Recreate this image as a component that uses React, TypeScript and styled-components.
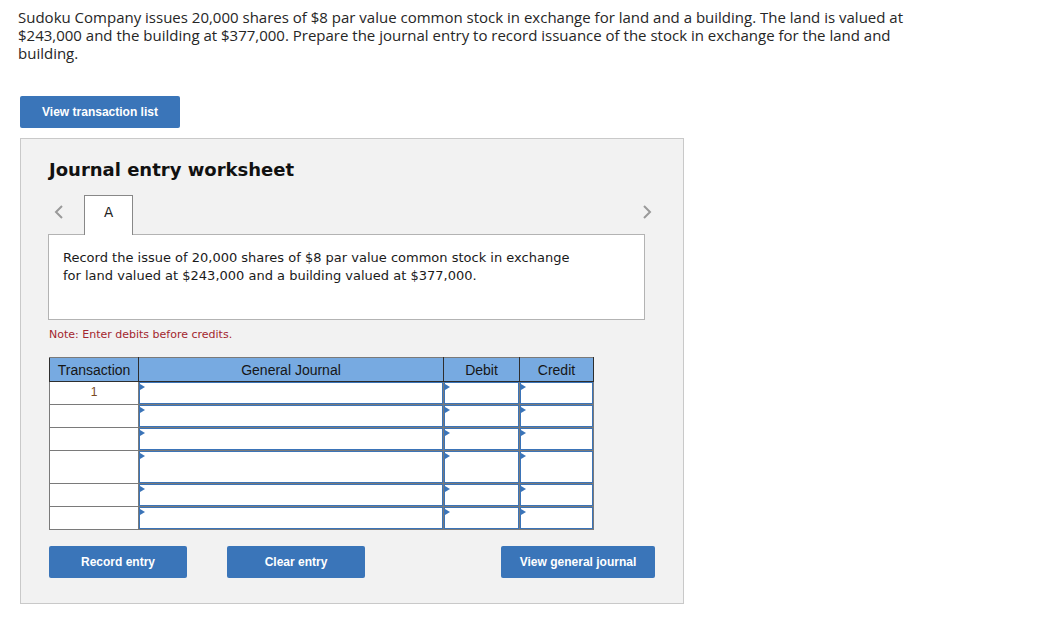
import React from "react"
import styled, { createGlobalStyle } from "styled-components"

const GlobalStyle = createGlobalStyle`
    body {
        margin: 0;
        background: #ffffff;
    }
`

const Page = styled.div`
    padding: 8px 20px 28px 20px;
    width: 1019px;
`

const Question = styled.p`
    margin: 0 0 34px -2px;
    width: 905px;
    font-family: "Open Sans", sans-serif;
    font-size: 15px;
    line-height: 18px;
    color: #262626;
`

const BlueButton = styled.button<{ $width: number }>`
    width: ${(p) => p.$width}px;
    height: 32px;
    padding: 0;
    border: none;
    border-radius: 2px;
    background: #3a75b9;
    color: #ffffff;
    font-family: "Liberation Sans", Arial, sans-serif;
    font-weight: bold;
    font-size: 12px;
    cursor: pointer;
`

const Panel = styled.div`
    margin-top: 10px;
    width: 606px;
    padding: 20px 28px 25px 28px;
    background: #f2f2f2;
    border: 1px solid #c9c9c9;
`

const Title = styled.h2`
    margin: 0 0 14px 0;
    font-family: "DejaVu Sans", Verdana, sans-serif;
    font-weight: bold;
    font-size: 18px;
    line-height: 22px;
    color: #111111;
`

const TabRow = styled.div`
    display: flex;
    align-items: flex-start;
    height: 40px;
    margin-bottom: -1px;
    position: relative;
    z-index: 1;
`

const Arrow = styled.div<{ $right?: boolean }>`
    display: flex;
    justify-content: center;
    padding-top: 9px;
    width: ${(p) => (p.$right ? "16px" : "20px")};
    margin-left: ${(p) => (p.$right ? "auto" : "0")};
    margin-right: ${(p) => (p.$right ? "0" : "15px")};
`

const Tab = styled.div`
    align-self: flex-end;
    width: 49px;
    height: 40px;
    padding-top: 8px;
    box-sizing: border-box;
    background: #ffffff;
    border: 1px solid #888888;
    border-bottom: none;
    text-align: center;
    font-family: "DejaVu Sans", Verdana, sans-serif;
    font-size: 13.5px;
    color: #222222;
`

const InfoBox = styled.div`
    width: 597px;
    height: 86px;
    box-sizing: border-box;
    padding: 14px 14px 0 14px;
    background: #ffffff;
    border: 1px solid #b3b3b3;
    margin-left: -1px;
`

const InfoText = styled.p`
    margin: 0;
    max-width: 520px;
    font-family: "DejaVu Sans", Verdana, sans-serif;
    font-size: 13px;
    line-height: 18px;
    color: #1a1a1a;
`

const Note = styled.p`
    margin: 8px 0 15px 0;
    font-family: "DejaVu Sans", Verdana, sans-serif;
    font-size: 11px;
    line-height: 14px;
    color: #a3262e;
`

const Table = styled.table`
    width: 544px;
    border-collapse: collapse;
    border: 1px solid #7a7a7a;
    table-layout: fixed;
    font-family: "Liberation Sans", Arial, sans-serif;
`

const HeadCell = styled.th<{ $width: number }>`
    width: ${(p) => p.$width}px;
    height: 23px;
    padding: 0;
    background: #77aae1;
    border: 1px solid #2e2e2e;
    border-top-color: #7a7a7a;
    font-weight: normal;
    font-size: 14px;
    color: #161616;
    text-align: center;
`

const Row = styled.tr<{ $height: number }>`
    height: ${(p) => p.$height}px;
`

const TxCell = styled.td`
    padding: 0;
    background: #ffffff;
    border: 1px solid #7a7a7a;
    text-align: center;
    vertical-align: top;
    font-size: 12px;
    line-height: 20px;
    color: #7a4a20;
`

const FieldCell = styled.td`
    padding: 0;
    border: 1px solid #7a7a7a;
    background: #ffffff;
    height: inherit;
`

const Field = styled.div`
    position: relative;
    height: 100%;
    box-sizing: border-box;
    border: 1px solid #3b74b8;
    background: #ffffff;

    &::before {
        content: "";
        position: absolute;
        left: 0;
        top: 1px;
        border-top: 3px solid transparent;
        border-bottom: 3px solid transparent;
        border-left: 5px solid #3b74b8;
    }
`

const ButtonRow = styled.div`
    display: flex;
    gap: 40px;
    margin-top: 16px;

    & > :last-child {
        margin-left: auto;
    }
`

const Chevron = ({ right }: { right?: boolean }) => (
    <svg width="10" height="16" viewBox="0 0 10 16">
        <polyline
            points={right ? "2,2 8,8 2,14" : "8,2 2,8 8,14"}
            fill="none"
            stroke="#9a9a9a"
            strokeWidth="2"
        />
    </svg>
)

const rows = [
    { tx: "1", height: 22 },
    { tx: "", height: 22 },
    { tx: "", height: 22 },
    { tx: "", height: 32 },
    { tx: "", height: 22 },
    { tx: "", height: 22 },
]

const App = (): JSX.Element => {
    return (
        <>
            <GlobalStyle />
            <Page>
                <Question>
                    Sudoku Company issues 20,000 shares of $8 par value common stock in exchange for land and a
                    building. The land is valued at $243,000 and the building at $377,000. Prepare the journal
                    entry to record issuance of the stock in exchange for the land and building.
                </Question>
                <BlueButton $width={160}>View transaction list</BlueButton>
                <Panel>
                    <Title>Journal entry worksheet</Title>
                    <TabRow>
                        <Arrow>
                            <Chevron />
                        </Arrow>
                        <Tab>A</Tab>
                        <Arrow $right>
                            <Chevron right />
                        </Arrow>
                    </TabRow>
                    <InfoBox>
                        <InfoText>
                            Record the issue of 20,000 shares of $8 par value common stock in exchange for land
                            valued at $243,000 and a building valued at $377,000.
                        </InfoText>
                    </InfoBox>
                    <Note>Note: Enter debits before credits.</Note>
                    <Table>
                        <thead>
                            <tr>
                                <HeadCell $width={88}>Transaction</HeadCell>
                                <HeadCell $width={304}>General Journal</HeadCell>
                                <HeadCell $width={75}>Debit</HeadCell>
                                <HeadCell $width={73}>Credit</HeadCell>
                            </tr>
                        </thead>
                        <tbody>
                            {rows.map((r, i) => (
                                <Row key={i} $height={r.height}>
                                    <TxCell>{r.tx}</TxCell>
                                    <FieldCell><Field /></FieldCell>
                                    <FieldCell><Field /></FieldCell>
                                    <FieldCell><Field /></FieldCell>
                                </Row>
                            ))}
                        </tbody>
                    </Table>
                    <ButtonRow>
                        <BlueButton $width={138}>Record entry</BlueButton>
                        <BlueButton $width={138}>Clear entry</BlueButton>
                        <BlueButton $width={154}>View general journal</BlueButton>
                    </ButtonRow>
                </Panel>
            </Page>
        </>
    )
}

export default App
